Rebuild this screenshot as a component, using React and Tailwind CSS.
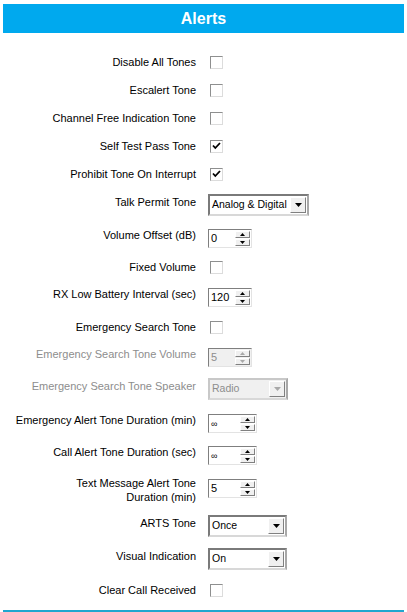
import React from "react";

const rows = [
    { label: "Disable All Tones", type: "check", mt: "mt-0" },
    { label: "Escalert Tone", type: "check", mt: "mt-0" },
    { label: "Channel Free Indication Tone", type: "check", mt: "mt-0" },
    { label: "Self Test Pass Tone", type: "check", checked: true, mt: "mt-0" },
    { label: "Prohibit Tone On Interrupt", type: "check", checked: true, mt: "mt-0" },
    { label: "Talk Permit Tone", type: "select", value: "Analog & Digital", w: "w-[101px]", mt: "mt-[3px]" },
    { label: "Volume Offset (dB)", type: "spin", value: "0", w: "w-[44px]", mt: "mt-[5px]" },
    { label: "Fixed Volume", type: "check", mt: "mt-[1px]" },
    { label: "RX Low Battery Interval (sec)", type: "spin", value: "120", w: "w-[44px]", mt: "mt-[2px]" },
    { label: "Emergency Search Tone", type: "check", mt: "mt-[2px]" },
    { label: "Emergency Search Tone Volume", type: "spin", value: "5", w: "w-[44px]", disabled: true, mt: "mt-[2px]" },
    { label: "Emergency Search Tone Speaker", type: "select", value: "Radio", w: "w-[80px]", disabled: true, mt: "mt-[4px]" },
    { label: "Emergency Alert Tone Duration (min)", type: "spin", value: "∞", w: "w-[49px]", mt: "mt-[6px]" },
    { label: "Call Alert Tone Duration (sec)", type: "spin", value: "∞", w: "w-[49px]", mt: "mt-[4px]" },
    { label: ["Text Message Alert Tone", "Duration (min)"], type: "spin", value: "5", w: "w-[49px]", mt: "mt-[5px]", wrap: true },
    { label: "ARTS Tone", type: "select", value: "Once", w: "w-[79px]", mt: "mt-[10px]" },
    { label: "Visual Indication", type: "select", value: "On", w: "w-[79px]", mt: "mt-[5px]" },
    { label: "Clear Call Received", type: "check", mt: "mt-[3px]" },
];

const Checkbox = ({ checked }) => (
    <div className="ml-[2px] w-[13px] h-[13px] border border-[#8e8f8f] border-b-[#dcdcdc] border-r-[#dcdcdc] bg-white flex items-center justify-center">
        {checked && (
            <svg width="9" height="8" viewBox="0 0 9 8">
                <path d="M1 3.5 L3.3 6 L8 1" stroke="#000" strokeWidth="1.8" fill="none" />
            </svg>
        )}
    </div>
);

const Arrow = ({ up, disabled }) => (
    <svg width="5" height="3" viewBox="0 0 5 3">
        <path d={up ? "M0 3 L2.5 0 L5 3 Z" : "M0 0 L2.5 3 L5 0 Z"} fill={disabled ? "#a8a8a8" : "#000"} />
    </svg>
);

const Spin = ({ value, w, disabled }) => (
    <div className={`${w} h-[19px] flex border border-[#7f7f7f] border-b-[#e3e3e3] border-r-[#e3e3e3] text-[11px] ${disabled ? "bg-[#f0f0f0] text-[#8d8d8d]" : "bg-white text-black"}`}>
        <div className={`flex-1 pl-[2px] flex items-center ${value === "∞" ? "text-[9px] pt-[3px]" : ""}`}>{value}</div>
        <div className="w-[16px] flex flex-col py-[1px] pr-[1px] gap-[1px]">
            <div className="flex-1 bg-[#f0f0f0] border border-[#fff] border-b-[#808080] border-r-[#808080] flex items-center justify-center">
                <Arrow up disabled={disabled} />
            </div>
            <div className="flex-1 bg-[#f0f0f0] border border-[#fff] border-b-[#808080] border-r-[#808080] flex items-center justify-center">
                <Arrow disabled={disabled} />
            </div>
        </div>
    </div>
);

const Select = ({ value, w, disabled }) => (
    <div className={`${w} h-[22px] flex border-2 border-[#7a7a7a] border-b-[#d8d8d8] border-r-[#a8a8a8] ${disabled ? "bg-[#f0f0f0] text-[#8d8d8d] border-[#c8c8c8]" : "bg-white text-black"}`}>
        <div className="flex-1 pl-[2px] flex items-center text-[10.5px] whitespace-nowrap overflow-hidden">{value}</div>
        <div className="w-[16px] my-[1px] mr-[1px] bg-[#f0f0f0] border border-[#fff] border-b-[#808080] border-r-[#808080] flex items-center justify-center">
            <svg width="7" height="4" viewBox="0 0 7 4">
                <path d="M0 0 L3.5 4 L7 0 Z" fill={disabled ? "#a8a8a8" : "#000"} />
            </svg>
        </div>
    </div>
);

const App = () => {
    return (
        <div className="w-[407px] h-[612px] bg-white overflow-hidden flex flex-col" style={{ fontFamily: '"Liberation Sans", Arial, sans-serif' }}>
            <div className="mx-[3px] mt-[4px] h-[29px] bg-[#00a9ee] flex items-center justify-center text-white font-bold text-[16px]">
                Alerts
            </div>

            <div className="pt-[15px] flex flex-col text-[11px]">
                {rows.map((row) => (
                    <div key={row.value + String(row.label)} className={`${row.mt} h-[28px] flex items-center`}>
                        <div
                            className={`w-[197px] pr-[1px] text-right leading-[14px] whitespace-nowrap
                            ${row.disabled ? "text-[#8d8d8d]" : "text-black"}
                            ${row.type !== "check" && !row.wrap ? "pb-[6px]" : ""}
                            ${row.wrap ? "pt-[3px]" : ""}`}
                        >
                            {row.wrap ? (
                                <>
                                    {row.label[0]}
                                    <br />
                                    {row.label[1]}
                                </>
                            ) : (
                                row.label
                            )}
                        </div>
                        <div className="ml-[11px] flex">
                            {row.type === "check" && <Checkbox checked={row.checked} />}
                            {row.type === "spin" && <Spin value={row.value} w={row.w} disabled={row.disabled} />}
                            {row.type === "select" && <Select value={row.value} w={row.w} disabled={row.disabled} />}
                        </div>
                    </div>
                ))}
            </div>

            <div className="mt-auto mx-[3px] h-[2px] bg-[#1fa6cf]" />
        </div>
    );
};

export default App;
